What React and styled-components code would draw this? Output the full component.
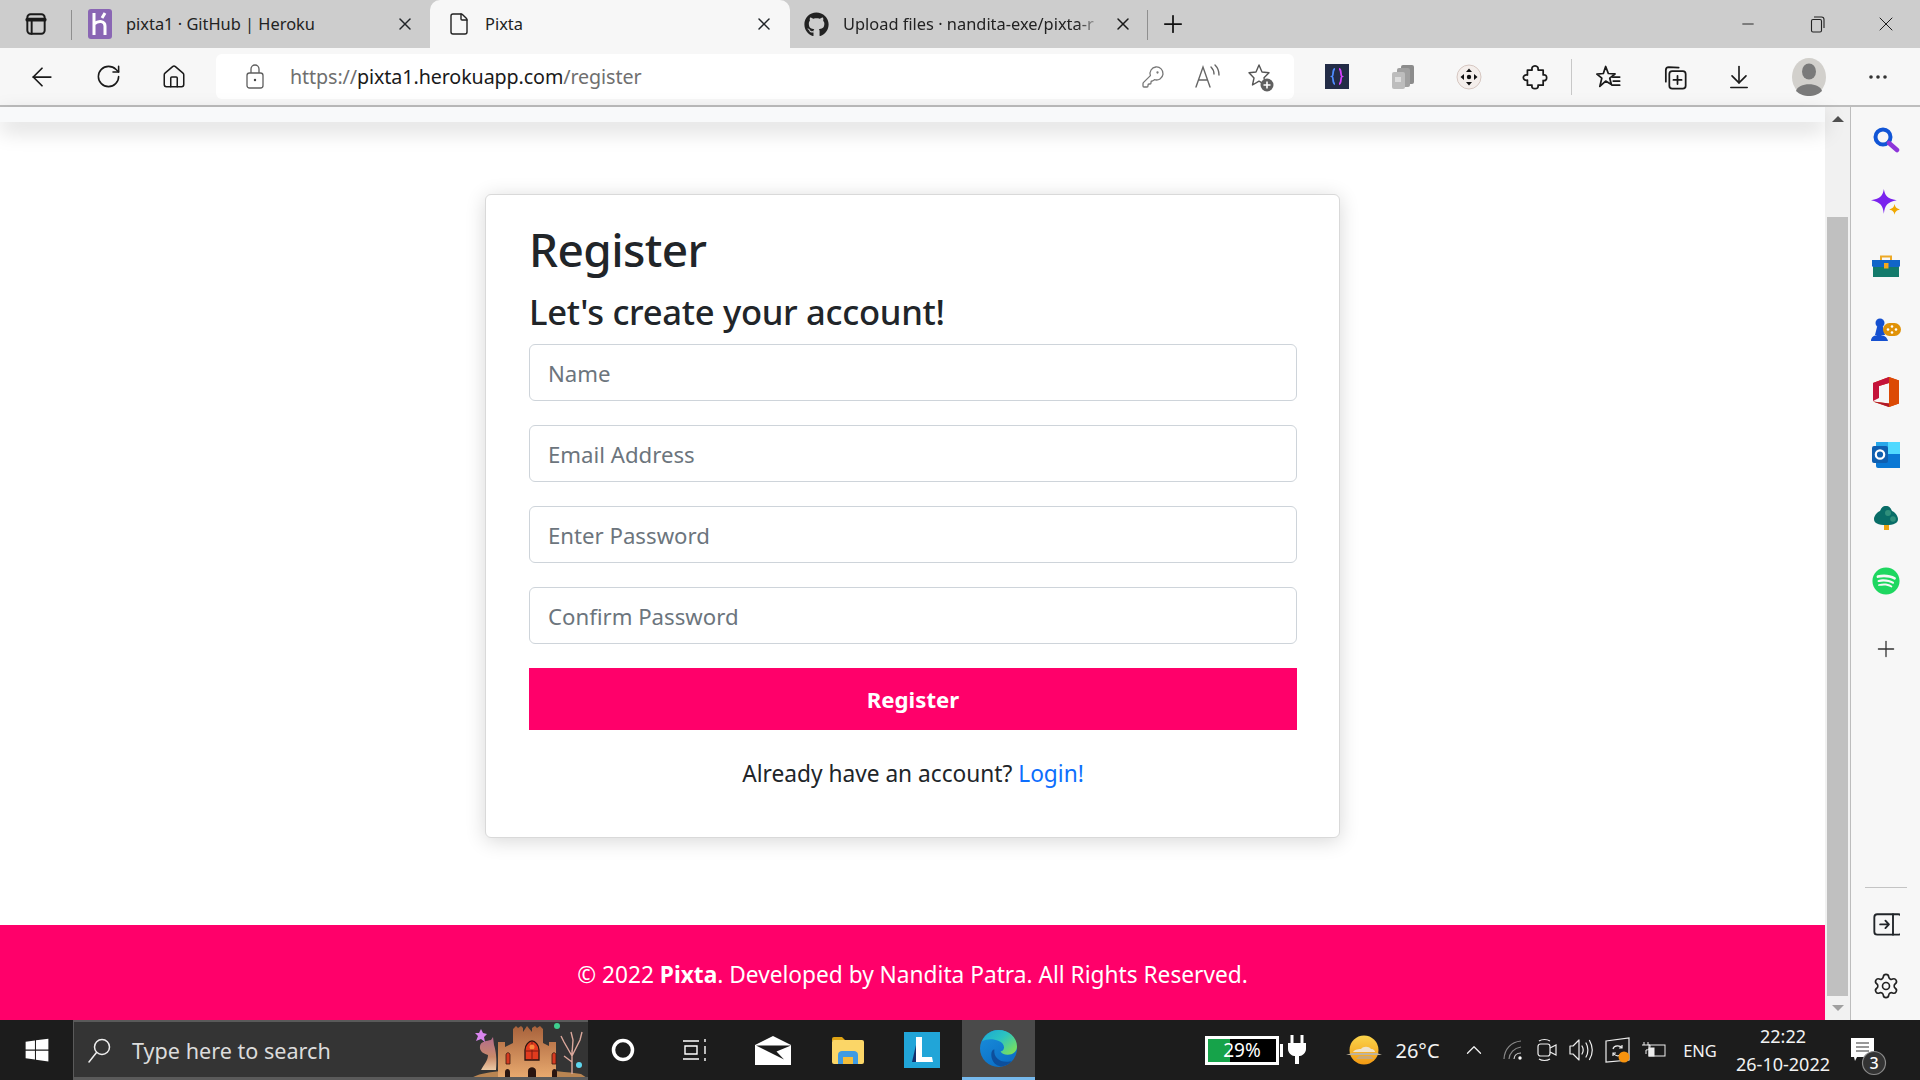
import React from 'react';
import styled, { createGlobalStyle } from 'styled-components';
import { FaGithub, FaSpotify, FaWindows } from 'react-icons/fa';
import { ArrowLeft, RotateCw, Home, KeyRound, ArrowDownToLine, Plus, X, Minus, Settings, ChevronUp, File } from 'lucide-react';

const Global = createGlobalStyle`
  html, body { margin: 0; padding: 0; width: 1920px; height: 1080px; overflow: hidden; background: #fff; }
  * { box-sizing: border-box; }
  body { font-family: "Noto Sans", "Open Sans", sans-serif; color: #212529; }
`;
const Screen = styled.div`display: flex; flex-direction: column; width: 1920px; height: 1080px; overflow: hidden;`;
const TabBar = styled.div`display: flex; align-items: center; height: 48px; background: #cdcdcd; flex: none;`;
const Slot = styled.div`
  display: flex; align-items: center; justify-content: center; flex: none;
  width: ${p => p.$w}px; height: ${p => p.$h ? `${p.$h}px` : '100%'}; color: ${p => p.$c || '#1a1a1a'};
  margin-left: ${p => p.$ml || 0}px; margin-top: ${p => p.$mt || 0}px;
  ${p => p.$flip && 'transform: scaleX(-1);'}
`;
const TabSep = styled.div`width: 1px; height: 30px; background: #8f8f8f; flex: none; margin-top: 2px;`;
const Tab = styled.div`
  display: flex; align-items: center; flex: none; height: 48px; width: ${p => p.$w}px;
  padding: 0 ${p => p.$pr}px 0 ${p => p.$pl}px; border-radius: 10px 10px 0 0;
  background: ${p => p.$active ? '#f7f7f7' : 'transparent'};
`;
const TabTitle = styled.div`
  flex: 1; min-width: 0; white-space: nowrap; font-size: 16.4px; color: #222; margin: 0 0 2px ${p => p.$ml}px;
  ${p => p.$fade && 'mask-image: linear-gradient(to right, #000 90%, transparent 100%);'}
`;
const NewTab = styled.div`display: flex; margin-left: 11px; color: #111;`;
const WindowControls = styled.div`display: flex; align-items: center; margin-left: auto; height: 100%;`;
const Toolbar = styled.div`
  display: flex; align-items: center; height: 59px; flex: none; background: #f7f7f7; padding: 0 9px;
  border-bottom: 2px solid #bdbdbd;
`;
const AddressBar = styled.div`
  display: flex; align-items: center; width: 1078px; height: 45px; margin: 0 10px 0 9px; background: #fff; border-radius: 6px; flex: none;
`;
const Url = styled.div`flex: 1; font-size: 19.7px; color: #6f6f6f; white-space: nowrap; margin-left: 5px; letter-spacing: -0.1px; b { font-weight: 400; color: #1a1a1a; }`;
const ToolSep = styled.div`width: 1px; height: 36px; background: #c8c8c8; flex: none; margin: 0 3px;`;
const Body = styled.div`display: flex; flex: 1; min-height: 0;`;
const Page = styled.div`display: flex; flex-direction: column; width: 1825px; flex: none; background: #fff;`;
const NavStrip = styled.div`height: 15px; background: #f8f9fa; box-shadow: 0 8px 22px rgba(0,0,0,.17); flex: none; position: relative;`;
const Main = styled.main`flex: 1; display: flex; justify-content: center; align-items: flex-start; padding-top: 72px;`;
const Card = styled.section`
  width: 855px; height: 644px; padding: 24px 42px 0 43px; background: #fff; border: 1px solid #d9d9d9; border-radius: 6px;
  box-shadow: 0 3px 20px rgba(0,0,0,.16);
`;
const Title = styled.h1`margin: 0; font-size: 46px; font-weight: 500; line-height: 60px; color: #212529; letter-spacing: -0.6px;`;
const Subtitle = styled.h2`margin: 8px 0 8px; font-size: 34.6px; font-weight: 500; line-height: 50px; color: #212529; letter-spacing: -0.3px; height: 49px;`;
const Form = styled.form`display: flex; flex-direction: column; gap: 24px;`;
const Input = styled.input`
  display: block; width: 100%; height: 57px; border: 1px solid #ced4da; border-radius: 6px; padding: 2px 18px 0; background: #fff;
  font: 400 22.2px "Noto Sans", sans-serif; color: #212529; outline: none;
  &::placeholder { color: #6c757d; opacity: 1; }
`;
const Submit = styled.button`
  height: 62px; border: 0; background: #ff006a; color: #fff; font: 700 22.2px "Noto Sans", sans-serif; cursor: pointer;
`;
const Already = styled.p`margin: 28px 0 0; text-align: center; font-size: 22.7px; line-height: 32px; color: #212529; a { color: #0d6efd; text-decoration: none; }`;
const Footer = styled.footer`
  height: 95px; flex: none; background: #ff006a; color: #fff; display: flex; align-items: center; justify-content: center; font-size: 22.7px; padding-top: 3px;
  b { font-weight: 700; }
`;
const Scrollbar = styled.div`display: flex; flex-direction: column; align-items: center; width: 25px; flex: none; background: #f1f1f1;`;
const ScrollBtn = styled.div`
  height: ${p => p.$h}px; width: 100%; flex: none; display: flex; justify-content: center; align-items: center;
  &::before { content: ''; border-left: 6px solid transparent; border-right: 6px solid transparent;
    ${p => p.$down ? 'border-top: 6px solid #a0a0a0;' : 'border-bottom: 6px solid #505050;'} }
`;
const Thumb = styled.div`width: 21px; flex: 1; background: #c0c0c0; margin-top: 87px;`;
const Sidebar = styled.aside`
  display: flex; flex-direction: column; align-items: center; width: 70px; flex: none; background: #f7f7f7; border-left: 1px solid #bdbdbd; padding: 1px 0 3px;
`;
const SideItem = styled.div`display: flex; align-items: center; justify-content: center; width: 100%; height: 63px; flex: none; margin-top: ${p => p.$mt || 0}px;`;
const SideSpacer = styled.div`flex: 1;`;
const SideRule = styled.div`width: 42px; height: 1px; background: #c4c4c4; margin: 0 0 3px 1px; flex: none;`;
const Taskbar = styled.div`display: flex; align-items: stretch; height: 60px; background: #1c1c1c; flex: none; color: #fff;`;
const SearchBox = styled.div`
  display: flex; align-items: center; width: 515px; flex: none; background: #343434; border: 1px solid #5a5a5a; border-top-width: 2px; border-bottom-width: 3px; border-right: 0; overflow: hidden;
`;
const SearchText = styled.div`flex: none; font-size: 21.6px; color: #dcdcdc; margin-left: 7px; padding-top: 2px; white-space: nowrap;`;
const EdgeSlot = styled.div`display: flex; align-items: center; justify-content: center; width: 73px; flex: none; background: #4a4a4a; border-bottom: 3px solid #76b9ed;`;
const Battery = styled.div`
  display: flex; align-items: center; justify-content: center; position: relative; width: 74px; height: 29px; flex: none; align-self: center; margin-left: 170px;
  background: linear-gradient(to right, #16a34a 0 33%, #000 33%); border: 3px solid #fff; font-size: 19px; color: #fff;
  &::after { content: ''; position: absolute; right: -7px; top: 5px; width: 3px; height: 13px; background: #fff; }
`;
const TrayText = styled.div`
  display: flex; align-items: center; flex: none; justify-content: center; width: ${p => p.$w}px; font-size: ${p => p.$fs}px; color: #f2f2f2; white-space: nowrap;
`;
const Clock = styled.div`
  display: flex; flex-direction: column; align-items: center; justify-content: center; gap: 7px; width: 114px; flex: none; font-size: 18px; line-height: 21px; color: #f2f2f2;
`;
const ArtSvg = styled.svg`margin-left: auto; flex: none; display: block;`;

const Line = ({ w = 24, children, sw = 1.5, c = 'currentColor', vb = '0 0 24 24' }) => (
  <svg width={w} height={w} viewBox={vb} fill="none" stroke={c} strokeWidth={sw} strokeLinecap="round" strokeLinejoin="round">{children}</svg>
);
const SidePanelIcon = () => <Line w={26} sw={1.8}><rect x="4" y="3" width="16" height="18" rx="3"/><path d="M4 8h16" strokeWidth="3.6"/><path d="M8 8v13"/></Line>;
const HerokuIcon = () => (
  <svg width="24" height="30" viewBox="0 0 24 30"><rect width="24" height="30" rx="3" fill="#8a66b4"/><path d="M6 4v22M6 15c5-4 11-3 11 2v9M17 4l-3 5" stroke="#fff" strokeWidth="3" fill="none"/></svg>
);
const LockIcon = () => (
  <svg width="20" height="28" viewBox="0 0 20 28" fill="none" stroke="#5f5f5f" strokeWidth="1.300"><rect x="2" y="10" width="16" height="15" rx="2.500"/><path d="M6 10V6a4 4 0 0 1 8 0v4"/><circle cx="10" cy="17" r="1.200" fill="#444" stroke="none"/></svg>
);
const FavAdd = () => (
  <svg width="30" height="30" viewBox="0 0 30 30" fill="none"><path d="M13 3l3 7 7 .8-5 5 1.500 7-6.500-3.600L6.500 23 8 16 3 10.800 10 10z" stroke="#555" strokeWidth="1.400" strokeLinejoin="round"/><circle cx="21" cy="23" r="6.500" fill="#606060"/><path d="M21 19.500v7M17.500 23h7" stroke="#fff" strokeWidth="1.600"/></svg>
);
const ReadAloud = () => (
  <svg width="30" height="30" viewBox="0 0 30 30" fill="none" stroke="#666" strokeWidth="1.400" strokeLinecap="round"><path d="M4 25L11 5l7 20M6.500 18h9"/><path d="M19 5c2 2 3 4 3 7M23 3c3 3 4 6 4 10" /></svg>
);
const BracesExt = () => (
  <svg width="24" height="25" viewBox="0 0 24 25"><rect width="24" height="25" fill="#232c47"/><path d="M10 5c-3 0-1 6.500-3 7.500 2 1 0 7.500 3 7.500" stroke="#4f8cff" strokeWidth="1.800" fill="none"/><path d="M14 5c3 0 1 6.500 3 7.500-2 1-0 7.500-3 7.500" stroke="#d640ff" strokeWidth="1.800" fill="none"/></svg>
);
const CopyExt = () => (
  <svg width="24" height="24" viewBox="0 0 24 24"><rect x="10" y="0" width="13" height="19" rx="2" fill="#8c8c8c"/><rect x="6" y="3" width="13" height="19" rx="2" fill="#a0a0a0"/><rect x="1" y="7" width="13" height="17" rx="2" fill="#bdbdbd"/><rect x="4" y="12" width="6" height="5" fill="#ddd"/></svg>
);
const PadExt = () => (
  <svg width="26" height="26" viewBox="0 0 26 26"><circle cx="13" cy="13" r="12" fill="#f4eeeb" stroke="#d6c7c1"/><path d="M13 4.500l3 3.500h-6zM13 21.500l3-3.500h-6zM4.500 13L8 10v6zM21.500 13L18 10v6z" fill="#111"/><circle cx="13" cy="13" r="2.200" fill="#111"/></svg>
);
const PuzzleIcon = () => (
  <Line w={28} sw={1.500}><path d="M12 2.500c2 0 3 1.500 2.600 3.500H19v4.200c2-.4 3 .8 3 2.400s-1 2.800-3 2.400V19h-4.400c.4 2-.6 3-2.600 3s-3-1-2.600-3H5.500v-4.300c-2 .4-3.500-.6-3.500-2.200s1.500-2.600 3.500-2.200V6h4C9 4 10 2.500 12 2.500z"/></Line>
);
const FavsIcon = () => <Line w={28} sw={1.500}><path d="M10 3l2.300 6 5.700.4-4.500 3.600 1.400 5.500L10 15.500 5 20l1.700-7L2.500 9.500 8 9z"/><path d="M16 12h6M16.500 15.500h5.500M15.500 19h6.500"/></Line>;
const CollectionsIcon = () => <Line w={28} sw={1.500}><rect x="8" y="7" width="14" height="15" rx="2.500"/><path d="M15 11v7M11.500 14.500h7M5 16V6c0-1.500 1-2.500 2.500-2.500L16 4"/></Line>;
const Avatar = () => (
  <svg width="34" height="38" viewBox="0 0 34 38"><ellipse cx="17" cy="19" rx="17" ry="19" fill="#d2d0cc"/><ellipse cx="17" cy="13.500" rx="7" ry="8" fill="#7a7a7a"/><path d="M4 33c2-9 24-9 26 0-4 4-9 5-13 5s-9-1-13-5z" fill="#7a7a7a"/></svg>
);
const Dots = () => <svg width="20" height="6" viewBox="0 0 20 6"><circle cx="3" cy="3" r="1.800" fill="#333"/><circle cx="10" cy="3" r="1.800" fill="#333"/><circle cx="17" cy="3" r="1.800" fill="#333"/></svg>;
const RestoreIcon = () => <svg width="18" height="18" viewBox="0 0 18 18" fill="none" stroke="#222" strokeWidth="1.100"><rect x="3.500" y="4.500" width="10" height="12.500" rx="1.500"/><path d="M6 2h7.500c1.500 0 2.500 1 2.500 2.500V13"/></svg>;

const SearchSide = () => (
  <svg width="28" height="28" viewBox="0 0 28 28" fill="none"><circle cx="11" cy="11" r="7.500" stroke="#1155d6" strokeWidth="4"/><path d="M17 17l8 7" stroke="#8d35d9" strokeWidth="4.500" strokeLinecap="round"/></svg>
);
const Sparkle = () => (
  <svg width="30" height="28" viewBox="0 0 28 26"><path d="M12 0c1 6 3 9 12 10.500-9 2-11 4.500-12 12.500-1-8-3-10.500-12-12.500C9 9 11 6 12 0z" fill="#7a22ee"/><path d="M22 14c.6 3 1.500 4 5 5-3.500 1-4.400 2-5 5-.6-3-1.500-4-5-5 3.500-1 4.400-2 5-5z" fill="#f0a800"/></svg>
);
const Toolbox = () => (
  <svg width="28" height="24" viewBox="0 0 28 24"><path d="M9 6V2.500h10V6" stroke="#eda926" strokeWidth="2" fill="none"/><rect x="1" y="12" width="26" height="11" fill="#137a6b"/><path d="M0 6h28v6l-1 1H1l-1-1z" fill="#1165c9"/><rect x="12" y="9" width="4.500" height="5.500" fill="#f2a81c"/></svg>
);
const Games = () => (
  <svg width="30" height="24" viewBox="0 0 30 24"><circle cx="9" cy="6" r="4.500" fill="#1550d0"/><path d="M6 10h6l2 8H4zM0 24c0-4 3-6 8-6s8 2 9 6z" fill="#1550d0"/><rect x="12" y="6" width="18" height="13" rx="6.500" fill="#e09208"/><g fill="#fff"><circle cx="17" cy="12.500" r="1.300"/><circle cx="21" cy="9.500" r="1.300"/><circle cx="21" cy="15.500" r="1.300"/><circle cx="25" cy="12.500" r="1.300"/></g></svg>
);
const Office = () => (
  <svg width="26" height="30" viewBox="0 0 26 30"><path d="M16 0l10 3.500v23L16 30 0 24.500l16 2V6l-10 3v11l-6 3V6z" fill="#d83b01"/><path d="M0 6v18l6-3V9l10-3V0z" fill="#c4133a"/><path d="M16 0l10 3.500v23L16 30V0z" fill="#dc4a05"/><path d="M0 24.500L16 30l0-3.500z" fill="#b11a2b"/></svg>
);
const Outlook = () => (
  <svg width="28" height="26" viewBox="0 0 28 26"><rect x="4" y="0" width="24" height="13" fill="#28a8ea"/><rect x="16" y="0" width="12" height="13" fill="#50d9ff"/><path d="M4 12h24v14H6a2 2 0 0 1-2-2z" fill="#0a78d4"/><rect x="0" y="4" width="16" height="17" rx="2" fill="#0f5fb0"/><circle cx="8" cy="12.500" r="4.200" fill="none" stroke="#fff" strokeWidth="2.200"/></svg>
);
const Tree = () => (
  <svg width="26" height="26" viewBox="0 0 26 26"><rect x="11" y="17" width="5" height="8" fill="#eda511"/><path d="M13 1c4 0 5 3 6 5 3 1 6 5 6 8 0 4-4 6-12 6S1 18 1 14c0-3 3-7 6-8 1-2 2-5 6-5z" fill="#096d67"/><circle cx="15" cy="8" r="3" fill="#2f8f7b"/><circle cx="20" cy="14" r="2.800" fill="#2f8f7b"/></svg>
);
const CollapseIcon = () => <Line w={28} sw={1.600}><rect x="2" y="4.500" width="23" height="17.500" rx="2.500"/><path d="M18 4.500v17.500M7 13.200h7M11.500 10l3 3.200-3 3.200"/></Line>;

const MailIcon = () => (
  <svg width="36" height="29" viewBox="0 0 36 29"><path d="M18 0l18 9v20H0V9z" fill="#fff"/><path d="M1 9.500h35L21.500 15.500 29 23.500z" fill="#1c1c1c"/></svg>
);
const FolderIcon = () => (
  <svg width="32" height="27" viewBox="0 0 32 27">
    <path d="M0 2a2 2 0 0 1 2-2h8l4 4H0z" fill="#dea314"/><rect x="0" y="3" width="32" height="24" rx="2" fill="#fbd667"/>
    <path d="M6 27v-9c0-3 2-4 4-4h12c2 0 4 1 4 4v9h-5v-7H11v7z" fill="#3f9be3"/><rect x="11" y="20" width="10" height="7" fill="#f4bd3a"/>
  </svg>
);
const LIcon = () => (
  <svg width="36" height="36" viewBox="0 0 36 36"><rect width="36" height="36" fill="#21a5d8"/><path d="M12 13L8 30h4z" fill="#12306e"/><path d="M12 5h6v20h10l1 5H12z" fill="#fff"/></svg>
);
const EdgeIcon = () => (
  <svg width="37" height="37" viewBox="0 0 36 36">
    <defs>
      <linearGradient id="eg1" x1="0" y1="0" x2="0.6" y2="1"><stop offset="0" stopColor="#1a8fdc"/><stop offset="1" stopColor="#0b6fc6"/></linearGradient>
      <linearGradient id="eg2" x1="0" y1="0" x2="1" y2="0.800"><stop offset="0" stopColor="#1aa8d6"/><stop offset="0.500" stopColor="#2cc3c0"/><stop offset="1" stopColor="#7ce05a"/></linearGradient>
    </defs>
    <circle cx="18" cy="18" r="18" fill="url(#eg1)"/>
    <path d="M2 11C5 4 11 0 18 0c10 0 18 7 18 16 0 5-4 8-9 8-4 0-6-1-7-3 3-1 4-3 3-6-2-6-15-8-21-4z" fill="url(#eg2)"/>
    <path d="M14 19c-1 7 4 12 12 12 2 0 4-.5 5-1-3 4-8 6-12 5-5-1-8-6-8-11 0-3 1-5 3-5z" fill="#0d4f9c"/>
  </svg>
);
const Cortana = () => <svg width="24" height="24" viewBox="0 0 24 24"><circle cx="12" cy="12" r="9.500" fill="none" stroke="#fff" strokeWidth="3.500"/></svg>;
const TaskView = () => (
  <svg width="26" height="24" viewBox="0 0 26 24" fill="none" stroke="#fff" strokeWidth="1.400"><path d="M1 3h16M1 21h16M3 8h12v8H3zM23 1v3M23 8v8M23 20v3"/></svg>
);
const SearchGlass = () => (
  <svg width="26" height="26" viewBox="0 0 26 26" fill="none" stroke="#eee" strokeWidth="1.500" strokeLinecap="round"><circle cx="11" cy="10" r="7.500"/><path d="M16.500 15.500L24 25"/></svg>
);
const Art = () => (
  <ArtSvg width="128" height="55" viewBox="0 2 128 55">
    <defs>
      <linearGradient id="cath" x1="0" y1="0" x2="0" y2="1"><stop offset="0" stopColor="#a8623c"/><stop offset="1" stopColor="#e8a96e"/></linearGradient>
      <linearGradient id="fig" x1="0" y1="0" x2="0" y2="1"><stop offset="0" stopColor="#b26a8c"/><stop offset="0.600" stopColor="#c88a6a"/><stop offset="1" stopColor="#ecc9a4"/></linearGradient>
    </defs>
    <path d="M9 60c6-6 20-8 34-9 30-2 60 0 78 3l9 6z" fill="#b98552"/>
    <path d="M21 50c3-6 7-9 7-15-3-1-9-3-8-9 1-5 7-5 11-6l2-3 1 8c2 6 3 14 2 25z" fill="url(#fig)"/>
    <path d="M21 9l2 4 4 1-3 3 1 5-4-3-5 2 2-5-3-3 4 0z" fill="#d985ef"/>
    <path d="M38 57V22h7v5l8-4V9l3-3 2 2 3-2 2 2v4l4-6 5 6V8l3-2 2 2 3-2 3 3v14l6 3v-4h7v35z" fill="url(#cath)"/>
    <path d="M65 40V30c0-5 4-9 7-9s7 4 7 9v10z" fill="#e23b1e" stroke="#2a1510" strokeWidth="1.300"/>
    <path d="M72 21v19M65 31h14" stroke="#7a1a10" strokeWidth="1"/><circle cx="72" cy="27" r="2.500" fill="#f98a3c"/>
    <path d="M46 44v-9c0-3 4-3 4 0v9zM92 44v-9c0-3 4-3 4 0v9z" fill="#d63a20" stroke="#3a1a10" strokeWidth=".8"/>
    <path d="M68 57v-6c0-5 8-5 8 0v6zM45 57v-5c0-4 5-4 5 0v5zM92 57v-5c0-4 5-4 5 0v5z" fill="#2a1510"/>
    <path d="M112 54V30M112 36l-8-14-3-6M112 34l1-14-2-8M112 36l8-16 2-8M112 42l-8-6" stroke="#dba89c" strokeWidth="1.400" fill="none"/>
    <circle cx="97" cy="6" r="3" fill="#3ecf8e"/><circle cx="119" cy="45" r="3" fill="#5fd6ee"/>
  </ArtSvg>
);
const WeatherIcon = () => (
  <svg width="36" height="30" viewBox="0 0 36 30" fill="none">
    <defs><linearGradient id="sun" x1="0" y1="0" x2="0" y2="1"><stop offset="0" stopColor="#fbd44c"/><stop offset="1" stopColor="#f39a13"/></linearGradient></defs>
    <circle cx="18" cy="15" r="14.500" fill="url(#sun)"/>
    <path d="M7 17c2-3 6-3 8-3 2-3 8-3 10 0 3 0 4 2 4 3z" fill="#efe3cd"/><path d="M0 20h36l-5-2H6z" fill="#bfb39c"/><path d="M10 24h18l-3-3H13z" fill="#c9a877"/>
  </svg>
);
const PlugIcon = () => <svg width="20" height="30" viewBox="0 0 20 30"><path d="M5 0v8M15 0v8" stroke="#fff" strokeWidth="3"/><path d="M1 8h18v6c0 4-4 7-6 7h-1v8H8v-8H7c-2 0-6-3-6-7z" fill="#fff"/></svg>;
const WifiIcon = () => <svg width="20" height="20" viewBox="0 0 20 20" fill="none" stroke="#8a8a8a" strokeWidth="1.200"><path d="M1 19C1.500 9 8 2 18 1M6 19c.5-6 5-11 12-12"/><path d="M11 19c.3-3 2.500-6 7-6" stroke="#ccc"/><circle cx="17" cy="18" r="1.700" fill="#fff" stroke="none"/></svg>;
const CamIcon = () => <svg width="20" height="24" viewBox="0 0 20 24" fill="none" stroke="#eee" strokeWidth="1.200"><rect x="1" y="6" width="12" height="12" rx="2.500"/><path d="M13 10l6-3v10l-6-3M2 3c3-2 8-2 11 0M2 21c3 2 8 2 11 0"/></svg>;
const SpeakerIcon = () => <svg width="24" height="24" viewBox="0 0 24 24" fill="none" stroke="#eee" strokeWidth="1.200" strokeLinejoin="round"><path d="M1 8h3l6-6v20l-6-6H1z"/><path d="M13 8c1.500 2.500 1.500 5.500 0 8M17 5c2.500 4 2.500 10 0 14M20.500 2.500c3.500 6 3.500 13 0 19" strokeLinecap="round"/></svg>;
const UpdateIcon = () => <svg width="26" height="26" viewBox="0 0 26 26" fill="none"><path d="M1 4l23-3v22L1 25z" stroke="#eee" strokeWidth="1.200"/><path d="M8 12c1-4 7-4 9-1M16 17c-2 3-6 2-8-1M17 8v3h-3M8 19v-3h3" stroke="#eee" strokeWidth="1.200"/><circle cx="19" cy="20" r="5.500" fill="#f7930e"/></svg>;
const PowerIcon = () => <svg width="24" height="16" viewBox="0 0 24 16" fill="none" stroke="#eee" strokeWidth="1"><path d="M2 0v3M6 0v3M0 3h8v2c0 2-2 3-4 3v4"/><rect x="7" y="3" width="16" height="11"/><rect x="7" y="6" width="5" height="8" fill="#eee"/></svg>;
const Notif = () => (
  <svg width="48" height="46" viewBox="0 0 48 46"><path d="M4 3h23v19h-17l-2 4-1-4H4z" fill="#fff"/><path d="M9 8h13M9 12h13M9 16h13" stroke="#333" strokeWidth="1.200"/><circle cx="27" cy="28" r="11.500" fill="#333" stroke="#8a8a8a" strokeWidth="1.200"/><text x="27" y="34" textAnchor="middle" fontSize="16" fontWeight="500" fill="#fff" fontFamily="Noto Sans">3</text></svg>
);

const close = <X size={20} strokeWidth={1.8} />;

export default function App() {
  return (
    <Screen>
      <Global />
      <TabBar>
        <Slot $w={71}><SidePanelIcon /></Slot>
        <TabSep />
        <Tab $w={358} $pl={16} $pr={15}>
          <HerokuIcon />
          <TabTitle $ml={14}>pixta1 · GitHub | Heroku</TabTitle>
          {close}
        </Tab>
        <Tab $w={360} $active $pl={17} $pr={16}>
          <File size={24} strokeWidth={1.4} color="#222" />
          <TabTitle $ml={14}>Pixta</TabTitle>
          {close}
        </Tab>
        <Tab $w={357} $pl={14} $pr={12}>
          <FaGithub size={25} color="#222" />
          <TabTitle $ml={14} $fade>Upload files · nandita-exe/pixta-r</TabTitle>
          <Slot $w={24} $h={24} $ml={8}>{close}</Slot>
        </Tab>
        <TabSep />
        <NewTab><Plus size={28} strokeWidth={1.5} /></NewTab>
        <WindowControls>
          <Slot $w={68}><Minus size={18} strokeWidth={1.2} /></Slot>
          <Slot $w={70}><RestoreIcon /></Slot>
          <Slot $w={68}><X size={24} strokeWidth={1} /></Slot>
        </WindowControls>
      </TabBar>
      <Toolbar>
        <Slot $w={66}><ArrowLeft size={30} strokeWidth={1.4} /></Slot>
        <Slot $w={66}><RotateCw size={27} strokeWidth={1.4} /></Slot>
        <Slot $w={66}><Home size={26} strokeWidth={1.4} /></Slot>
        <AddressBar>
          <Slot $w={61} $ml={8}><LockIcon /></Slot>
          <Url>https://<b>pixta1.herokuapp.com</b>/register</Url>
          <Slot $w={54} $c="#777"><KeyRound size={24} strokeWidth={1.3} /></Slot>
          <Slot $w={54}><ReadAloud /></Slot>
          <Slot $w={54}><FavAdd /></Slot>
          <Slot $w={6} />
        </AddressBar>
        <Slot $w={66}><BracesExt /></Slot>
        <Slot $w={66}><CopyExt /></Slot>
        <Slot $w={66}><PadExt /></Slot>
        <Slot $w={66}><PuzzleIcon /></Slot>
        <ToolSep />
        <Slot $w={66}><FavsIcon /></Slot>
        <Slot $w={66}><CollectionsIcon /></Slot>
        <Slot $w={64}><ArrowDownToLine size={28} strokeWidth={1.4} /></Slot>
        <Slot $w={76}><Avatar /></Slot>
        <Slot $w={62}><Dots /></Slot>
      </Toolbar>
      <Body>
        <Page>
          <NavStrip />
          <Main>
            <Card>
              <Title>Register</Title>
              <Subtitle>Let's create your account!</Subtitle>
              <Form onSubmit={e => e.preventDefault()}>
                <Input placeholder="Name" />
                <Input placeholder="Email Address" />
                <Input placeholder="Enter Password" />
                <Input placeholder="Confirm Password" />
                <Submit type="submit">Register</Submit>
              </Form>
              <Already>Already have an account? <a href="#login">Login!</a></Already>
            </Card>
          </Main>
          <Footer><span>© 2022 <b>Pixta</b>. Developed by Nandita Patra. All Rights Reserved.</span></Footer>
        </Page>
        <Scrollbar>
          <ScrollBtn $h={23} />
          <Thumb />
          <ScrollBtn $down $h={24} />
        </Scrollbar>
        <Sidebar>
          <SideItem><SearchSide /></SideItem>
          <SideItem><Sparkle /></SideItem>
          <SideItem><Toolbox /></SideItem>
          <SideItem><Games /></SideItem>
          <SideItem><Office /></SideItem>
          <SideItem><Outlook /></SideItem>
          <SideItem><Tree /></SideItem>
          <SideItem><FaSpotify size={28} color="#1ed760" /></SideItem>
          <SideItem $mt={5}><Plus size={26} strokeWidth={1.2} color="#333" /></SideItem>
          <SideSpacer />
          <SideRule />
          <SideItem><CollapseIcon /></SideItem>
          <SideItem><Settings size={28} strokeWidth={1.4} color="#222" /></SideItem>
        </Sidebar>
      </Body>
      <Taskbar>
        <Slot $w={73} $c="#fff"><FaWindows size={26} /></Slot>
        <SearchBox>
          <Slot $w={50} $ml={1} $flip><SearchGlass /></Slot>
          <SearchText>Type here to search</SearchText>
          <Art />
        </SearchBox>
        <Slot $w={70}><Cortana /></Slot>
        <Slot $w={74}><TaskView /></Slot>
        <Slot $w={82}><MailIcon /></Slot>
        <Slot $w={68}><FolderIcon /></Slot>
        <Slot $w={80}><LIcon /></Slot>
        <EdgeSlot><EdgeIcon /></EdgeSlot>
        <Battery>29%</Battery>
        <Slot $w={36}><PlugIcon /></Slot>
        <Slot $w={48} $ml={25}><WeatherIcon /></Slot>
        <TrayText $w={59} $fs={20}>26°C</TrayText>
        <Slot $w={36} $ml={9} $c="#f0f0f0"><ChevronUp size={26} strokeWidth={1.2} /></Slot>
        <Slot $w={42}><WifiIcon /></Slot>
        <Slot $w={26}><CamIcon /></Slot>
        <Slot $w={42}><SpeakerIcon /></Slot>
        <Slot $w={32}><UpdateIcon /></Slot>
        <Slot $w={40}><PowerIcon /></Slot>
        <TrayText $w={52} $fs={16.5}>ENG</TrayText>
        <Clock><span>22:22</span><span>26-10-2022</span></Clock>
        <Slot $w={62} $mt={8}><Notif /></Slot>
      </Taskbar>
    </Screen>
  );
}
